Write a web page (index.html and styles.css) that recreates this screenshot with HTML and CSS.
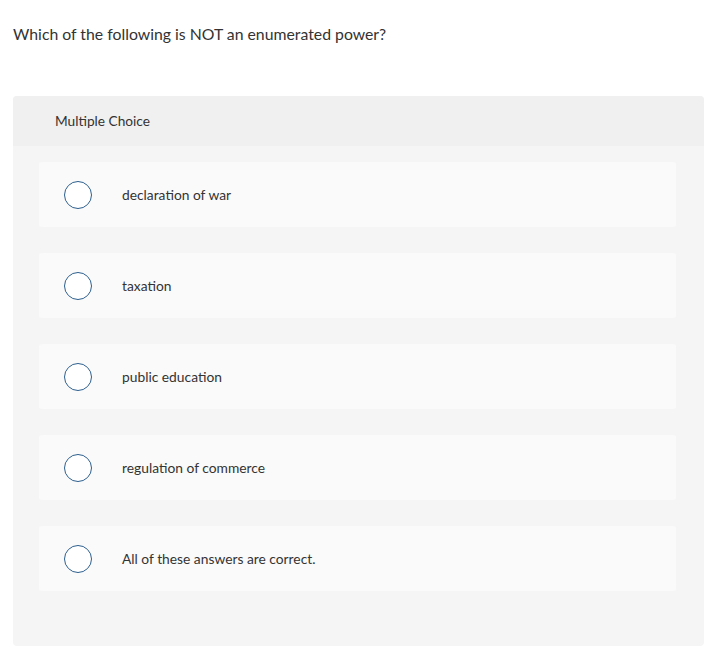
FILE: index.html
```html
<!DOCTYPE html>
<html>
<head>
<meta charset="utf-8">
<link rel="stylesheet" href="styles.css">
</head>
<body>
<p class="question">Which of the following is NOT an enumerated power?</p>
<div class="panel">
  <div class="panel-header">Multiple Choice</div>
  <div class="options">
    <label class="option"><span class="radio"></span><span class="label">declaration of war</span></label>
    <label class="option"><span class="radio"></span><span class="label">taxation</span></label>
    <label class="option"><span class="radio"></span><span class="label">public education</span></label>
    <label class="option"><span class="radio"></span><span class="label">regulation of commerce</span></label>
    <label class="option"><span class="radio"></span><span class="label">All of these answers are correct.</span></label>
  </div>
</div>
</body>
</html>
```
FILE: styles.css
```css
html, body {
  margin: 0;
  padding: 0;
  background: #ffffff;
}
body {
  font-family: Lato, "Open Sans", sans-serif;
  color: #2b2b2b;
  padding: 0 2px 0 13px;
}
.question {
  margin: 0;
  padding-top: 24px;
  height: 96px;
  box-sizing: border-box;
  font-size: 15.8px;
  line-height: 20px;
  color: #333;
}
.panel {
  background: #f5f5f5;
  border-radius: 4px;
  height: 550px;
  overflow: hidden;
}
.panel-header {
  background: #f0f0f0;
  height: 50px;
  box-sizing: border-box;
  padding: 16px 0 0 42px;
  font-size: 13.7px;
  line-height: 18px;
  color: #333;
}
.options {
  display: flex;
  flex-direction: column;
  gap: 26px;
  padding: 16px 28px 0 26px;
}
.option {
  display: flex;
  align-items: center;
  height: 65px;
  background: #fafafa;
  border-radius: 3px;
  padding-left: 25px;
}
.radio {
  width: 28px;
  height: 28px;
  box-sizing: border-box;
  border: 1.5px solid #2d5f8e;
  border-radius: 50%;
  background: #fff;
  flex: none;
}
.label {
  margin-left: 30px;
  font-size: 13.8px;
  color: #333;
}
```
